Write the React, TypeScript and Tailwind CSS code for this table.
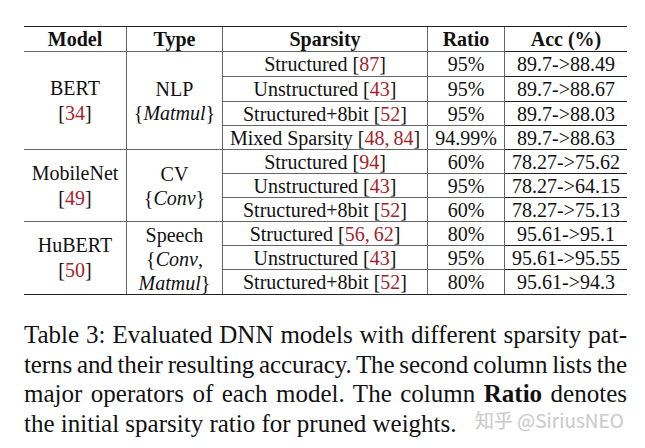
const Cite = ({ children }: { children: React.ReactNode }) => (
  <>
    [<span className="text-[#a3232b]">{children}</span>]
  </>
);

const line = "border-b border-[#222]";
const vline = "border-r border-[#666]";

type Row = { sparsity: React.ReactNode; ratio: string; acc: string };

const groups: {
  model: string;
  cite: string;
  type: React.ReactNode;
  rows: Row[];
}[] = [
  {
    model: "BERT",
    cite: "34",
    type: (
      <>
        <div>NLP</div>
        <div>
          {"{"}
          <i>Matmul</i>
          {"}"}
        </div>
      </>
    ),
    rows: [
      { sparsity: <>Structured <Cite>87</Cite></>, ratio: "95%", acc: "89.7->88.49" },
      { sparsity: <>Unstructured <Cite>43</Cite></>, ratio: "95%", acc: "89.7->88.67" },
      { sparsity: <>Structured+8bit <Cite>52</Cite></>, ratio: "95%", acc: "89.7->88.03" },
      { sparsity: <>Mixed Sparsity <Cite>48,&thinsp;84</Cite></>, ratio: "94.99%", acc: "89.7->88.63" },
    ],
  },
  {
    model: "MobileNet",
    cite: "49",
    type: (
      <>
        <div>CV</div>
        <div>
          {"{"}
          <i>Conv</i>
          {"}"}
        </div>
      </>
    ),
    rows: [
      { sparsity: <>Structured <Cite>94</Cite></>, ratio: "60%", acc: "78.27->75.62" },
      { sparsity: <>Unstructured <Cite>43</Cite></>, ratio: "95%", acc: "78.27->64.15" },
      { sparsity: <>Structured+8bit <Cite>52</Cite></>, ratio: "60%", acc: "78.27->75.13" },
    ],
  },
  {
    model: "HuBERT",
    cite: "50",
    type: (
      <>
        <div>Speech</div>
        <div>
          {"{"}
          <i>Conv</i>,
        </div>
        <div>
          <i>Matmul</i>
          {"}"}
        </div>
      </>
    ),
    rows: [
      { sparsity: <>Structured <Cite>56,&thinsp;62</Cite></>, ratio: "80%", acc: "95.61->95.1" },
      { sparsity: <>Unstructured <Cite>43</Cite></>, ratio: "95%", acc: "95.61->95.55" },
      { sparsity: <>Structured+8bit <Cite>52</Cite></>, ratio: "80%", acc: "95.61->94.3" },
    ],
  },
];

const spans = ["row-span-4", "row-span-3", "row-span-3"];

export default function App() {
  return (
    <div
      className="w-[645px] h-[448px] bg-white text-[#111] relative overflow-hidden"
      style={{ fontFamily: '"Liberation Serif", "Times New Roman", serif' }}
    >
      <div className="pt-[26px] pl-[24px]">
        <div className="w-[603px] border-t border-b border-[#222] grid grid-cols-[103px_96px_205px_77px_122px] grid-rows-[25px_25px_25px_24px_24px_24px_24px_24px_24px_24px_24px] text-[20px] leading-[24px]">
          {["Model", "Type", "Sparsity", "Ratio", "Acc (%)"].map((h, i) => (
            <div
              key={h}
              className={`${line} ${i < 4 ? vline : ""} flex items-center justify-center font-bold`}
            >
              {h}
            </div>
          ))}
          {groups.map((g, gi) => {
            const last = gi === groups.length - 1;
            return (
              <div key={g.model} className="contents">
                <div
                  className={`${spans[gi]} ${last ? "" : line} ${vline} flex flex-col items-center justify-center leading-[25px]`}
                >
                  <div>{g.model}</div>
                  <div>
                    <Cite>{g.cite}</Cite>
                  </div>
                </div>
                <div
                  className={`${spans[gi]} ${last ? "" : line} ${vline} flex flex-col items-center justify-center leading-[24px] pt-[1px]`}
                >
                  {g.type}
                </div>
                {g.rows.map((r, ri) => {
                  const b = last && ri === g.rows.length - 1 ? "" : line;
                  return (
                    <div key={ri} className="contents">
                      <div className={`col-start-3 ${b} ${vline} flex items-center justify-center whitespace-nowrap`}>
                        {r.sparsity}
                      </div>
                      <div className={`${b} ${vline} flex items-center justify-center`}>{r.ratio}</div>
                      <div className={`${b} flex items-center justify-center`}>{r.acc}</div>
                    </div>
                  );
                })}
              </div>
            );
          })}
        </div>
      </div>

      <div className="pl-[24px] w-[627px] mt-[25px] text-[25px] leading-[29.5px]">
        <div className="text-justify [text-align-last:justify] whitespace-nowrap [word-spacing:-2px]">
          Table 3: Evaluated DNN models with different sparsity pat-
        </div>
        <div className="text-justify [text-align-last:justify] whitespace-nowrap [word-spacing:-2.5px] tracking-[-0.1px]">
          terns and their resulting accuracy. The second column lists the
        </div>
        <div className="text-justify [text-align-last:justify] whitespace-nowrap [word-spacing:-2px]">
          major operators of each model. The column <b>Ratio</b> denotes
        </div>
        <div className="whitespace-nowrap">the initial sparsity ratio for pruned weights.</div>
      </div>

      <div
        className="absolute left-[475px] top-[407px] text-[19px] leading-[26px] text-[#cdcdcd] whitespace-nowrap [text-shadow:0_0_1px_#e6e6e6]"
        style={{ fontFamily: '"Noto Sans CJK SC", "Noto Sans", sans-serif' }}
      >
        知乎 @SiriusNEO
      </div>
    </div>
  );
}
